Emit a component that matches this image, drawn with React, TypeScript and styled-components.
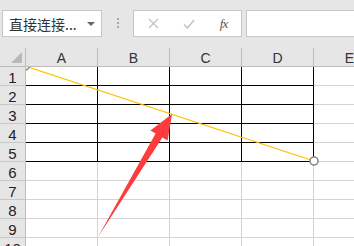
import React from "react";
import styled, { createGlobalStyle } from "styled-components";

const GlobalStyle = createGlobalStyle`
  html, body {
    margin: 0;
    padding: 0;
    background: #ffffff;
    overflow: hidden;
  }
  body {
    font-family: "Liberation Sans", Arial, "Noto Sans CJK SC", sans-serif;
  }
`;

const Page = styled.div`
  position: relative;
  width: 354px;
  height: 246px;
  overflow: hidden;
  background: #ffffff;
`;

const Toolbar = styled.div`
  display: flex;
  align-items: flex-start;
  height: 48px;
  box-sizing: border-box;
  padding: 10px 0 0 2px;
  background: #e6e6e6;
  overflow: hidden;
  & > * {
    flex-shrink: 0;
  }
`;

const NameBox = styled.div`
  display: flex;
  align-items: center;
  justify-content: space-between;
  box-sizing: border-box;
  width: 100px;
  height: 27px;
  padding: 0 6px 0 6px;
  background: #ffffff;
  border: 1px solid #c6c6c6;
  font-family: "Noto Sans CJK SC", "Liberation Sans", sans-serif;
  font-size: 14px;
  color: #333333;
  white-space: nowrap;
`;

const DropArrow = styled.span`
  width: 0;
  height: 0;
  border-left: 4px solid transparent;
  border-right: 4px solid transparent;
  border-top: 4px solid #666666;
  margin-top: 1px;
`;

const Grip = styled.div`
  display: flex;
  flex-direction: column;
  gap: 2px;
  margin: 8px 14px 0 15px;
  span {
    width: 2px;
    height: 2px;
    background: #a8a8a8;
  }
`;

const ButtonBox = styled.div`
  display: flex;
  align-items: center;
  box-sizing: border-box;
  width: 109px;
  height: 27px;
  background: #ffffff;
  border: 1px solid #c6c6c6;
`;

const IconSlot = styled.div<{ $w: number }>`
  display: flex;
  align-items: center;
  justify-content: center;
  width: ${(p) => p.$w}px;
  height: 100%;
`;

const Fx = styled.span`
  font-family: "Liberation Serif", "Times New Roman", serif;
  font-style: italic;
  font-size: 13px;
  color: #555555;
  letter-spacing: -1px;
`;

const FormulaInput = styled.div`
  box-sizing: border-box;
  width: 120px;
  height: 27px;
  margin-left: 4px;
  background: #ffffff;
  border: 1px solid #c6c6c6;
`;

const Sheet = styled.div`
  display: grid;
  grid-template-columns: 26px repeat(5, 72px);
  grid-auto-rows: 19px;
  width: 386px;
`;

const Corner = styled.div`
  position: relative;
  box-sizing: border-box;
  background: #e6e6e6;
  border-right: 1px solid #bcbcbc;
  border-bottom: 1px solid #bcbcbc;
  &::after {
    content: "";
    position: absolute;
    right: 3px;
    bottom: 3px;
    width: 0;
    height: 0;
    border-left: 11px solid transparent;
    border-bottom: 11px solid #b8b8b8;
  }
`;

const ColHead = styled.div`
  display: flex;
  align-items: center;
  justify-content: center;
  box-sizing: border-box;
  background: #e6e6e6;
  border-right: 1px solid #bcbcbc;
  border-bottom: 1px solid #bcbcbc;
  font-size: 14px;
  color: #333333;
  padding-top: 2px;
`;

const RowHead = styled.div`
  display: flex;
  align-items: center;
  justify-content: center;
  box-sizing: border-box;
  background: #e6e6e6;
  border-right: 1px solid #bcbcbc;
  border-bottom: 1px solid #c8c8c8;
  font-size: 15px;
  color: #222222;
  padding-top: 2px;
`;

const Cell = styled.div<{ $right: boolean; $bottom: boolean }>`
  box-sizing: border-box;
  background: #ffffff;
  border-right: 1px solid ${(p) => (p.$right ? "#000000" : "#d4d4d4")};
  border-bottom: 1px solid ${(p) => (p.$bottom ? "#000000" : "#d4d4d4")};
`;

const Overlay = styled.svg`
  position: absolute;
  left: 0;
  top: 0;
  pointer-events: none;
`;

const columns = ["A", "B", "C", "D", "E"];
const rows = [1, 2, 3, 4, 5, 6, 7, 8, 9, 10];

const App = () => {
  return (
    <Page>
      <GlobalStyle />
      <Toolbar>
        <NameBox>
          <span>直接连接...</span>
          <DropArrow />
        </NameBox>
        <Grip>
          <span />
          <span />
          <span />
        </Grip>
        <ButtonBox>
          <IconSlot $w={38}>
            <svg width="11" height="11" viewBox="0 0 11 11">
              <path d="M1 1L10 10M10 1L1 10" stroke="#c4c4c4" strokeWidth="1.4" />
            </svg>
          </IconSlot>
          <IconSlot $w={34}>
            <svg width="12" height="10" viewBox="0 0 12 10">
              <path d="M1 5.5L4.5 9L11 1" stroke="#c4c4c4" strokeWidth="1.6" fill="none" />
            </svg>
          </IconSlot>
          <IconSlot $w={35}>
            <Fx>fx</Fx>
          </IconSlot>
        </ButtonBox>
        <FormulaInput />
      </Toolbar>
      <Sheet>
        <Corner />
        {columns.map((c) => (
          <ColHead key={c}>{c}</ColHead>
        ))}
        {rows.map((r) => (
          <React.Fragment key={r}>
            <RowHead>{r}</RowHead>
            {columns.map((c, i) => (
              <Cell key={c} $right={r <= 5 && i < 4} $bottom={r <= 5 && i < 4} />
            ))}
          </React.Fragment>
        ))}
      </Sheet>
      <Overlay width="354" height="246" viewBox="0 0 354 246">
        <defs>
          <clipPath id="cells">
            <rect x="26" y="67" width="330" height="180" />
          </clipPath>
        </defs>
        <g clipPath="url(#cells)">
          <line x1="25" y1="66" x2="314" y2="161" stroke="#ffc000" strokeWidth="1.2" />
          <circle cx="25" cy="66" r="4" fill="#ffffff" stroke="#8c8c8c" strokeWidth="1.6" />
          <circle cx="314" cy="161" r="4" fill="#ffffff" stroke="#8c8c8c" strokeWidth="1.6" />
        </g>
        <polygon
          points="172,114 167.6,140.6 162.4,137.5 98,237 155.6,133.5 150.4,130.4"
          fill="#ff3b3b"
        />
      </Overlay>
    </Page>
  );
};

export default App;
